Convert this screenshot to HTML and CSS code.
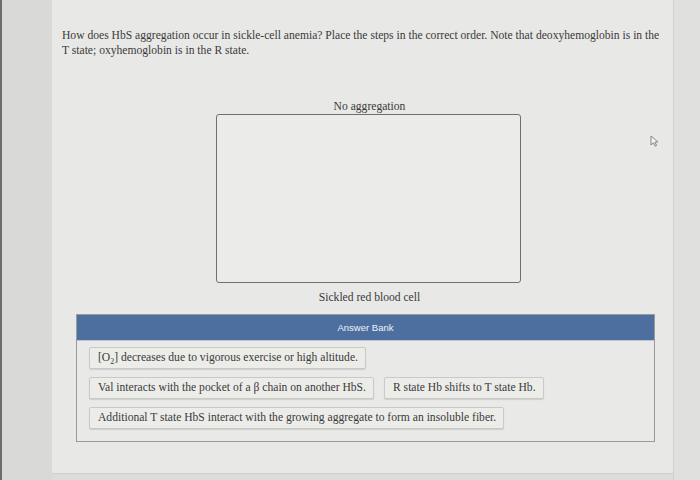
FILE: index.html
```html
<!DOCTYPE html>
<html lang="en">
<head>
    <meta charset="UTF-8">
    <title>Ordering question</title>
    <link rel="stylesheet" href="styles.css">
</head>
<body>
    <div class="screen">
        <div class="side side-left"></div>
        <main class="panel">
            <p class="question">How does HbS aggregation occur in sickle-cell anemia? Place the steps in the correct order. Note that deoxyhemoglobin is in the T state; oxyhemoglobin is in the R state.</p>

            <div class="order">
                <div class="order-label">No aggregation</div>
                <div class="drop-box"></div>
                <div class="order-label">Sickled red blood cell</div>
            </div>

            <svg class="cursor" width="9" height="12" viewBox="0 0 9 12">
                <path d="M1 1 L1 10 L3.4 7.8 L5.2 11.2 L6.6 10.5 L4.9 7.2 L8 7 Z" fill="#f4f4f4" stroke="#7a7a7a" stroke-width="0.9"/>
            </svg>

            <section class="bank">
                <div class="bank-title">Answer Bank</div>
                <div class="bank-items">
                    <div class="bank-row">
                        <span class="chip">[O<sub>2</sub>] decreases due to vigorous exercise or high altitude.</span>
                    </div>
                    <div class="bank-row">
                        <span class="chip">Val interacts with the pocket of a β chain on another HbS.</span>
                        <span class="chip">R state Hb shifts to T state Hb.</span>
                    </div>
                    <div class="bank-row">
                        <span class="chip">Additional T state HbS interact with the growing aggregate to form an insoluble fiber.</span>
                    </div>
                </div>
            </section>
        </main>
        <div class="side side-right"></div>
    </div>
</body>
</html>
```

FILE: styles.css
```css
body {
    margin: 0;
    background-color: #dcdcda;
    font-family: 'Liberation Serif', 'Times New Roman', serif;
    color: #3a3a3a;
}
.screen {
    display: flex;
    width: 700px;
    height: 480px;
    overflow: hidden;
}
.side {
    flex: none;
}
.side-left {
    width: 50px;
    background-color: #d9d9d7;
    border-left: 2px solid #6e6e6e;
}
.side-right {
    width: 26px;
    background-color: #e0e0de;
    border-left: 1px solid #d0d0ce;
}
.panel {
    position: relative;
    flex: 1;
    background-color: #e8e8e6;
    border-bottom: 1px solid #cfcfcd;
    height: 473px;
    padding: 0 10px 0 10px;
}
.question {
    margin: 28px 0 0 0;
    font-size: 11.6px;
    line-height: 15px;
}
.order {
    display: flex;
    flex-direction: column;
    align-items: center;
    margin-top: 42px;
}
.order-label {
    font-size: 11.6px;
    line-height: 14px;
    margin-left: 14px;
}
.drop-box {
    width: 303px;
    height: 167px;
    margin: 0 0 8px 12px;
    border: 1px solid #6f6f72;
    border-radius: 3px;
    background-color: #ebebe9;
}
.cursor {
    position: absolute;
    left: 598px;
    top: 135px;
}
.bank {
    margin: 9px 8px 0 14px;
    border: 1px solid #9a9a98;
}
.bank-title {
    background-color: #4c6f9f;
    color: #f2f4f8;
    font-family: 'Liberation Sans Narrow', 'Liberation Sans', Arial, sans-serif;
    font-size: 9.5px;
    text-align: center;
    line-height: 25px;
    border-bottom: 1px solid #b8c4d4;
}
.bank-items {
    display: flex;
    flex-direction: column;
    gap: 8px;
    padding: 6px 13px 12px 12px;
    background-color: #e9e9e7;
}
.bank-row {
    display: flex;
    gap: 10px;
}
.chip {
    display: inline-block;
    padding: 0 7px 0 8px;
    line-height: 20px;
    font-size: 11.6px;
    background-color: #ecece9;
    border: 1px solid #c9c9c7;
    border-radius: 2px;
    box-shadow: 0 1px 1px rgba(0, 0, 0, 0.12);
}
.chip sub {
    font-size: 8px;
    line-height: 0;
}
```
